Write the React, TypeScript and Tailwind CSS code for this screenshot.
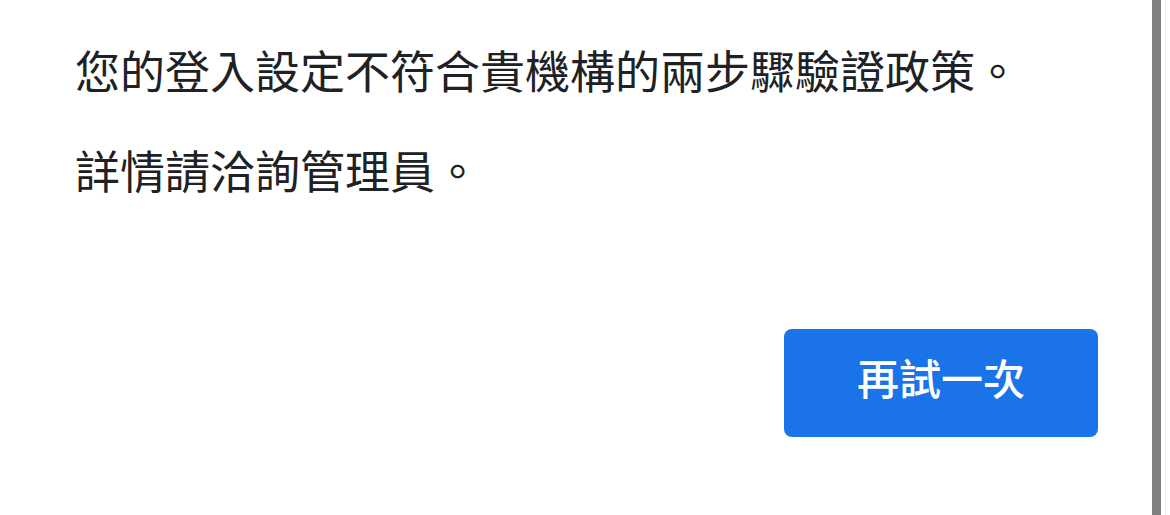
export default function App() {
  return (
    <div
      lang="zh-TW"
      className="flex h-[515px] w-full bg-white"
      style={{ fontFamily: '"Noto Sans CJK TC", "Noto Sans", sans-serif' }}
    >
      <main className="flex flex-1 flex-col pl-[75px] pr-[54px] text-[#202124]">
        <p className="mt-[42px] text-[45px] leading-[56px]">
          您的登入設定不符合貴機構的兩步驟驗證政策。
        </p>
        <p className="mt-[44px] text-[45px] leading-[56px]">詳情請洽詢管理員。</p>
        <div className="mt-[131px] flex justify-end">
          <button className="flex h-[108px] w-[314px] items-center justify-center rounded-[8px] bg-[#1a73e8] pb-[12px] text-[42px] leading-[56px] font-medium text-white">
            再試一次
          </button>
        </div>
      </main>
      <div className="h-full w-[9px] bg-[#808080]" />
      <div className="flex h-full w-[9px] justify-center">
        <div className="h-full w-px bg-[#f0f0f0]" />
      </div>
    </div>
  );
}
